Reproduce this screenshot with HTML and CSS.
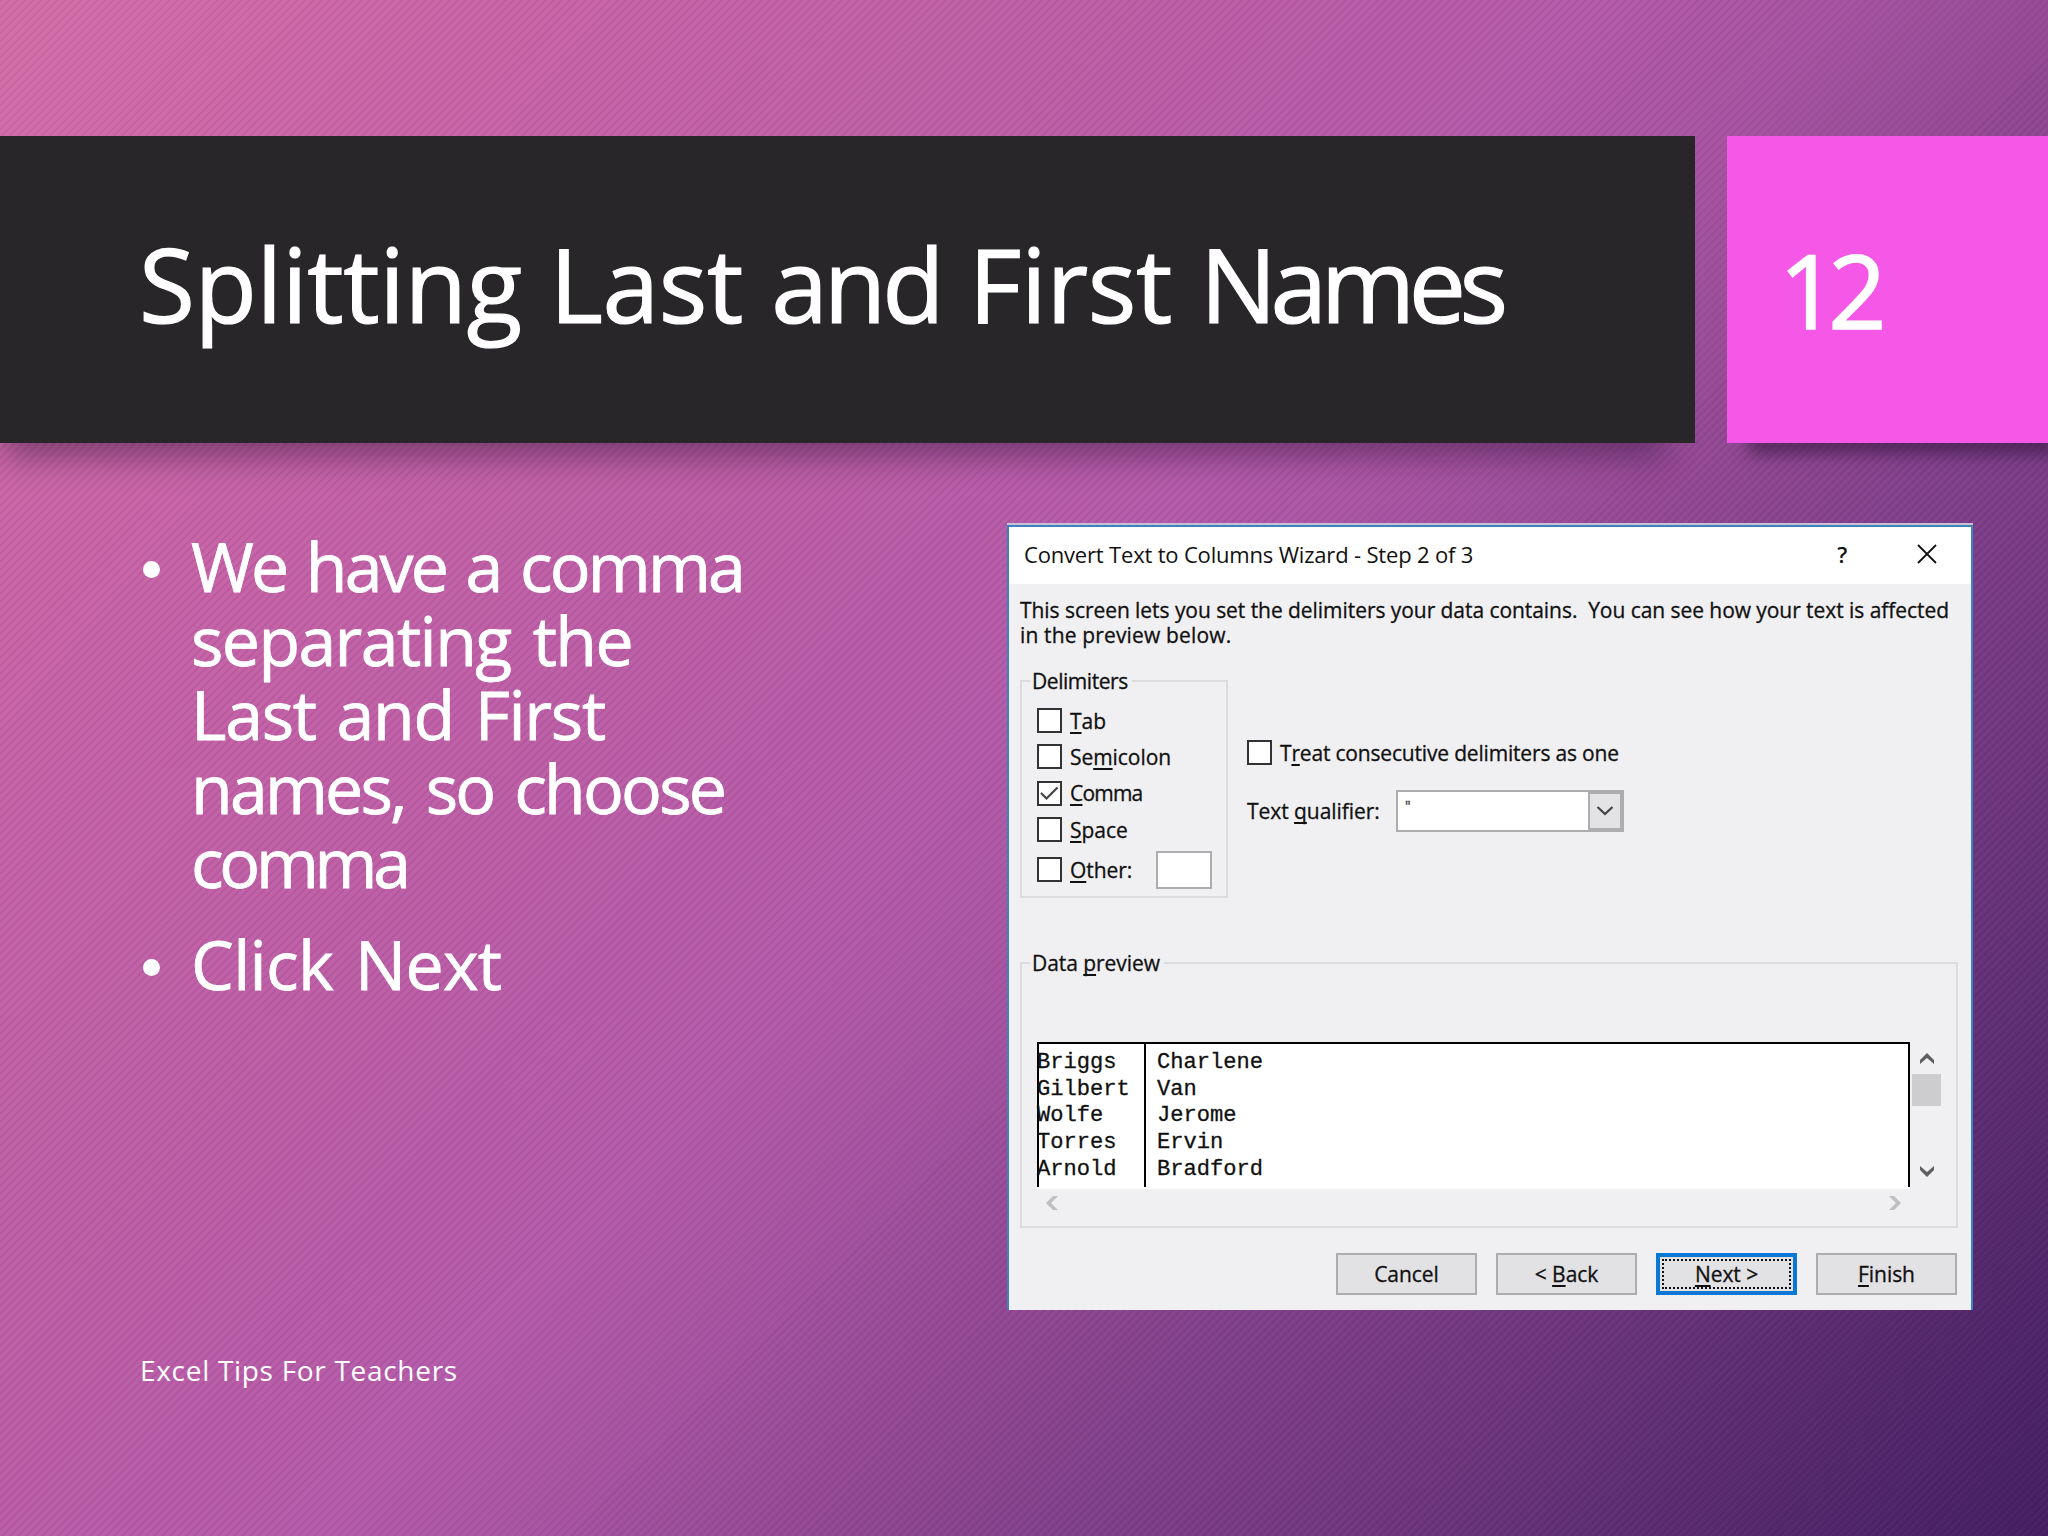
FILE: index.html
```
<!DOCTYPE html>
<html lang="en">
<head>
  <meta charset="UTF-8">
  <meta name="viewport" content="width=device-width, initial-scale=1.0">
  <title>Splitting Last and First Names</title>
  <link rel="stylesheet" href="styles.css">
</head>
<body>
  <div class="slide">
    <header class="banner">
      <div class="title-box"><h1>Splitting Last <span class="and-word">and</span> First <span class="names-word">Names</span></h1></div>
      <div class="number-box">12</div>
    </header>

    <main class="content">
      <ul class="bullets">
        <li><span class="l1">We have a comma</span><br><span class="l2">separating the</span><br><span class="l3">Last and First</span><br><span class="l4">names, so choose</span><br><span class="l5">comma</span></li>
        <li><span class="l6">Click Next</span></li>
      </ul>

      <section class="dialog">
        <div class="titlebar">
          <span class="caption">Convert Text to Columns Wizard - Step 2 of 3</span>
          <span class="help">?</span>
          <svg class="close" width="20" height="20" viewBox="0 0 20 20"><path d="M1 1L19 19M19 1L1 19" fill="none" stroke="#111" stroke-width="1.8"/></svg>
        </div>
        <p class="intro">This screen lets you set the delimiters your data contains.&nbsp; You can see how your text is affected<br><span class="intro2">in the preview below.</span></p>

        <div class="options">
          <div class="group delimiters">
            <span class="legend">Delimiters</span>
            <div class="check"><i class="box"></i><span><u>T</u>ab</span></div>
            <div class="check"><i class="box"></i><span>Se<u>m</u>icolon</span></div>
            <div class="check"><i class="box"><svg width="21" height="21" viewBox="0 0 21 21"><path d="M2 10L7.5 15.5L18.5 4.5" fill="none" stroke="#444" stroke-width="2.2"/></svg></i><span class="comma"><u>C</u>omma</span></div>
            <div class="check"><i class="box"></i><span><u>S</u>pace</span></div>
            <div class="check other"><i class="box"></i><span><u>O</u>ther:</span><i class="other-input"></i></div>
          </div>
          <div class="side">
            <div class="check treat"><i class="box"></i><span>T<u>r</u>eat consecutive delimiters as one</span></div>
            <div class="qualifier">
              <span class="qlabel">Text <u>q</u>ualifier:</span>
              <div class="combo">
                <span class="combo-value">"</span>
                <span class="combo-button"><svg width="18" height="10" viewBox="0 0 18 10"><path d="M1.5 1L9 8L16.5 1" fill="none" stroke="#444" stroke-width="2.2"/></svg></span>
              </div>
            </div>
          </div>
        </div>

        <div class="group preview">
          <span class="legend">Data <u>p</u>review</span>
          <div class="preview-row">
            <div class="grid">
              <div class="col first">Briggs<br>Gilbert<br>Wolfe<br>Torres<br>Arnold</div>
              <div class="col second">Charlene<br>Van<br>Jerome<br>Ervin<br>Bradford</div>
            </div>
            <div class="vscroll">
              <svg width="14" height="12" viewBox="0 0 14 12"><path d="M0 7L7 0L14 7V11L7 5L0 11Z" fill="#606060"/></svg>
              <i class="thumb"></i>
              <svg class="down" width="14" height="12" viewBox="0 0 14 12"><path d="M0 1L7 7L14 1V5L7 12L0 5Z" fill="#606060"/></svg>
            </div>
          </div>
          <div class="hscroll">
            <svg width="12" height="14" viewBox="0 0 12 14"><path d="M7 0H12L5 7L12 14H7L0 7Z" fill="#bfbfbf"/></svg>
            <svg width="12" height="14" viewBox="0 0 12 14"><path d="M5 0H0L7 7L0 14H5L12 7Z" fill="#bfbfbf"/></svg>
          </div>
        </div>

        <div class="buttons">
          <span class="btn">Cancel</span>
          <span class="btn">&lt; <u>B</u>ack</span>
          <span class="btn default"><span><u>N</u>ext &gt;</span></span>
          <span class="btn"><u>F</u>inish</span>
        </div>
      </section>
    </main>

    <footer class="footer">Excel Tips For Teachers</footer>
  </div>
</body>
</html>
```
FILE: styles.css
```
* {
  box-sizing: border-box;
}
body {
  margin: 0;
  font-family: "Open Sans", sans-serif;
}
.slide {
  width: 2048px;
  height: 1536px;
  overflow: hidden;
  padding-top: 136px;
  color: #fff;
  background:
    repeating-linear-gradient(135deg, rgba(90, 20, 90, 0.08) 0 2px, rgba(255, 200, 240, 0.03) 2px 5.66px),
    linear-gradient(130deg, #d26ca6 0%, #c663a5 18%, #bb5da5 36%, #b35aa8 48%, #a5529f 55%, #924892 62%, #7d3e89 71%, #6b347b 80%, #572a6e 88%, #401c60 100%);
}
.banner {
  display: flex;
  gap: 32px;
  height: 307px;
}
.title-box {
  width: 1695px;
  padding-left: 139px;
  background: #282629;
  box-shadow: -14px 32px 30px -18px rgba(40, 15, 50, 0.45);
}
h1 {
  margin: 0;
  padding-top: 78px;
  font-size: 102px;
  line-height: 140px;
  font-weight: 400;
  letter-spacing: -0.4px;
  word-spacing: 2px;
  white-space: nowrap;
  -webkit-text-stroke: 1.2px #fff;
}
.and-word {
  letter-spacing: -4px;
}
.names-word {
  letter-spacing: -6.4px;
}
.number-box {
  flex: 1;
  padding: 84px 0 0 52px;
  font-size: 102px;
  line-height: 140px;
  letter-spacing: -9px;
  background: #f558e7;
  box-shadow: 14px 20px 14px -8px rgba(40, 15, 50, 0.5);
  -webkit-text-stroke: 1.6px #fff;
}
.content {
  display: flex;
  height: 867px;
  padding-top: 80px;
}
.bullets {
  width: 1007px;
  margin: 0;
  padding: 6px 0 0 191px;
  font-size: 68px;
  line-height: 74px;
  list-style: none;
  white-space: nowrap;
  -webkit-text-stroke: 0.8px #fff;
}
.bullets li {
  position: relative;
  margin-bottom: 28px;
}
.bullets li::before {
  content: "";
  position: absolute;
  left: -48px;
  top: 32px;
  width: 17px;
  height: 17px;
  border-radius: 50%;
  background: #fff;
}
.l1 {
  letter-spacing: -2.8px;
  word-spacing: 4.5px;
}
.l2 {
  letter-spacing: -1.6px;
  word-spacing: 6px;
}
.l3 {
  letter-spacing: -1.3px;
  word-spacing: 4.5px;
}
.l4 {
  letter-spacing: -2.8px;
  word-spacing: 6px;
}
.l5 {
  letter-spacing: -4.3px;
}
.l6 {
  letter-spacing: -0.7px;
  word-spacing: 5px;
}
.dialog {
  display: flex;
  flex-direction: column;
  width: 966px;
  height: 787px;
  border-top: 2px solid #c9bfd8;
  color: #111;
  font-size: 21px;
  line-height: 26px;
  letter-spacing: -0.055px;
  white-space: nowrap;
  background: #f0eff1;
  box-shadow: inset 2px 2px #3a84b8, inset -2px 0 #3a84c0;
  -webkit-text-stroke: 0.3px #111;
}
u {
  text-decoration-thickness: 2px;
  text-underline-offset: 3px;
  text-decoration-skip-ink: none;
}
.titlebar {
  display: flex;
  align-items: center;
  height: 57px;
  margin: 2px 2px 0;
  padding: 0 34px 4px 15px;
  font-size: 22px;
  letter-spacing: -0.18px;
  background: #fff;
  -webkit-text-stroke: 0;
}
.help {
  margin-left: auto;
  font-weight: 600;
}
.close {
  margin-left: 70px;
}
.intro {
  margin: 14px 0 0 13px;
  line-height: 25px;
}
.intro2 {
  letter-spacing: 0.15px;
}
.options {
  display: flex;
  height: 218px;
  margin: 32px 0 0 13px;
}
.group {
  position: relative;
  border: 2px solid #dcdcde;
}
.legend {
  position: absolute;
  left: 8px;
  top: -14px;
  padding: 0 4px 0 2px;
  background: #f0eff1;
}
.delimiters {
  width: 208px;
  padding: 26px 0 0 15px;
}
.delimiters .legend {
  letter-spacing: -0.45px;
}
.check {
  display: flex;
  align-items: center;
  gap: 8px;
  height: 25px;
  margin-bottom: 11.4px;
}
.comma {
  letter-spacing: -0.8px;
}
.box {
  width: 25px;
  height: 25px;
  border: 2px solid #333;
  background: #fff;
}
.box svg {
  display: block;
}
.check.other {
  margin-top: 15px;
}
.other-input {
  width: 56px;
  height: 38px;
  margin-left: auto;
  margin-right: 14px;
  border: 2px solid #adadb0;
  background: #fff;
}
.side {
  padding: 60px 0 0 19px;
}
.check.treat {
  margin-bottom: 25px;
  letter-spacing: -0.18px;
}
.qualifier {
  display: flex;
  align-items: center;
}
.qlabel {
  width: 149px;
}
.combo {
  display: flex;
  width: 228px;
  height: 42px;
  border: 2px solid #adadb0;
  background: #fff;
}
.combo-value {
  flex: 1;
  padding: 3px 7px;
  font-size: 14px;
  line-height: 22px;
  color: #555;
}
.combo-button {
  display: flex;
  align-items: center;
  justify-content: center;
  width: 34px;
  border: 2px solid #adadb0;
  background: #e3e2e4;
}
.preview {
  width: 938px;
  height: 266px;
  margin: 64px 0 0 13px;
  padding: 78px 0 0 15px;
}
.preview-row {
  display: flex;
  height: 147px;
}
.grid {
  display: flex;
  width: 873px;
  background: linear-gradient(#000, #000) 0 0 / 2px 143px no-repeat, linear-gradient(#000, #000) 107px 0 / 2px 143px no-repeat, linear-gradient(#000, #000) 100% 0 / 2px 143px no-repeat, #fff;
  border-top: 2px solid #000;
  font-family: "Liberation Mono", monospace;
  font-size: 22.1px;
  line-height: 26.7px;
  letter-spacing: 0;
}
.col {
  padding-top: 6px;
}
.first {
  width: 120px;
}
.vscroll {
  display: flex;
  flex-direction: column;
  align-items: center;
  width: 29px;
  margin-left: 2px;
  padding-top: 11px;
}
.thumb {
  width: 29px;
  height: 32px;
  margin-top: 9px;
  background: #cdccce;
}
.down {
  margin-top: 59px;
}
.hscroll {
  display: flex;
  justify-content: space-between;
  width: 873px;
  padding: 7px 9px 0;
}
.buttons {
  display: flex;
  justify-content: flex-end;
  gap: 19px;
  margin: 25px 16px 0 0;
}
.btn {
  display: flex;
  align-items: center;
  justify-content: center;
  width: 141px;
  height: 42px;
  border: 2px solid #adadb0;
  background: #e2e1e3;
  white-space: pre;
}
.btn.default {
  padding: 2px;
  border: 4px solid #0a78d4;
}
.default span {
  width: 100%;
  height: 100%;
  border: 2px dotted #111;
  text-align: center;
}
.footer {
  padding-left: 140px;
  font-size: 28px;
  line-height: 40px;
  margin-top: 40px;
  letter-spacing: 0.7px;
}
```
